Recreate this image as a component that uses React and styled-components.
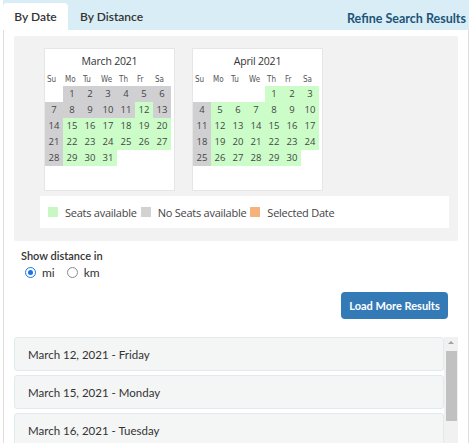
import React from "react";
import styled, { createGlobalStyle } from "styled-components";

const Global = createGlobalStyle`
  html, body { margin: 0; padding: 0; overflow: hidden; background: #fff; }
  body { font-family: Lato, "Open Sans", sans-serif; color: #333; }
  * { box-sizing: border-box; }
`;

const Page = styled.div`
  width: 474px;
  height: 443px;
  padding-left: 3px;
  padding-right: 5px;
  overflow: hidden;
`;

const TabBar = styled.div`
  height: 30px;
  background: #d9edf6;
  display: flex;
  align-items: flex-end;
`;

const Tab = styled.div`
  height: 27px;
  padding: 0 12px;
  display: flex;
  align-items: center;
  justify-content: center;
  white-space: nowrap;
  font-size: 12px;
  font-weight: 600;
  color: #333;
  background: ${(p) => (p.$active ? "#fff" : "transparent")};
  border-radius: 4px 4px 0 0;
  width: ${(p) => (p.$active ? "65px" : "auto")};
`;

const Refine = styled.div`
  margin-left: auto;
  align-self: center;
  padding-top: 6px;
  padding-right: 3px;
  font-size: 12.5px;
  font-weight: 700;
  color: #1d5578;
  white-space: nowrap;
`;

const Panel = styled.div`
  border-left: 1px solid #dedede;
  border-right: 1px solid #dedede;
  padding: 6px 10px 0 10px;
  height: 413px;
`;

const GrayBox = styled.div`
  background: #f2f2f2;
  padding: 12px 9px 13px 26px;
  border-radius: 2px;
`;

const CalRow = styled.div`
  display: flex;
  gap: 17px;
  margin-left: 4px;
`;

const CalBox = styled.div`
  width: 131px;
  height: 143px;
  background: #fff;
  border: 1px solid #e6e6e6;
  padding-top: 4px;
`;

const CalTitle = styled.div`
  height: 16px;
  line-height: 16px;
  text-align: center;
  font-family: "Open Sans", sans-serif;
  font-size: 10.5px;
  color: #333;
  margin-bottom: 5px;
  letter-spacing: -0.2px;
`;

const Grid = styled.div`
  display: grid;
  grid-template-columns: repeat(7, 18px);
`;

const Head = styled.div`
  height: 12px;
  line-height: 12px;
  padding-left: 2px;
  font-family: "DejaVu Sans Condensed", "DejaVu Sans", sans-serif;
  font-stretch: condensed;
  font-size: 8px;
  color: #555;
`;

const Cell = styled.div`
  height: 16px;
  line-height: 16px;
  text-align: center;
  font-family: "Open Sans", sans-serif;
  font-size: 9.5px;
  color: #444;
  background: ${(p) =>
    p.$status === "green" ? "#ccfdc9" : p.$status === "gray" ? "#d0d0d2" : "transparent"};
`;

const Legend = styled.div`
  margin-top: 5px;
  height: 32px;
  background: #fff;
  display: flex;
  align-items: center;
  padding-left: 8px;
  font-family: "Open Sans", sans-serif;
  font-size: 11px;
  color: #444;
  letter-spacing: -0.25px;
`;

const Swatch = styled.span`
  width: 10px;
  height: 10px;
  background: ${(p) => p.$color};
  margin-right: 7px;
  flex: none;
`;

const LegendText = styled.span`
  margin-right: 4px;
`;

const DistLabel = styled.div`
  margin-top: 7px;
  padding-left: 7px;
  height: 16px;
  line-height: 16px;
  font-size: 11px;
  font-weight: 600;
  color: #333;
`;

const RadioRow = styled.div`
  display: flex;
  align-items: center;
  height: 16px;
  padding-left: 11px;
  font-size: 12px;
  color: #333;
`;

const Radio = styled.span`
  width: 11px;
  height: 11px;
  border-radius: 50%;
  border: 1px solid ${(p) => (p.$checked ? "#1a73e8" : "#8a8a8a")};
  display: flex;
  align-items: center;
  justify-content: center;
  margin-right: 6px;
  background: #fff;
  &::after {
    content: "";
    width: 5px;
    height: 5px;
    border-radius: 50%;
    background: ${(p) => (p.$checked ? "#1a73e8" : "transparent")};
  }
`;

const RadioLabel = styled.span`
  margin-right: 12px;
`;

const ButtonRow = styled.div`
  display: flex;
  justify-content: flex-end;
  padding-right: 10px;
  margin-top: 12px;
`;

const Button = styled.button`
  width: 107px;
  height: 27px;
  border: none;
  border-radius: 4px;
  background: #337ab7;
  color: #fff;
  font-family: Lato, sans-serif;
  font-size: 11px;
  font-weight: 700;
  padding: 0;
`;

const ListArea = styled.div`
  margin-top: 18px;
  height: 106px;
  display: flex;
  overflow: hidden;
`;

const Rows = styled.div`
  flex: 1;
  display: flex;
  flex-direction: column;
  gap: 4px;
`;

const Row = styled.div`
  flex: none;
  height: 34px;
  background: #f4f5f5;
  border: 1px solid #e1eaed;
  border-radius: 3px;
  padding-left: 13px;
  display: flex;
  align-items: center;
  font-size: 11.5px;
  color: #333;
`;

const Scrollbar = styled.div`
  width: 14px;
  background: #f1f1f1;
  display: flex;
  flex-direction: column;
  align-items: center;
`;

const Arrow = styled.div`
  margin-top: 4px;
  width: 0;
  height: 0;
  border-left: 3px solid transparent;
  border-right: 3px solid transparent;
  border-bottom: 3px solid #a3a3a3;
`;

const Thumb = styled.div`
  margin-top: 7px;
  width: 11px;
  height: 70px;
  background: #c1c1c1;
`;

const HEADS = ["Su", "Mo", "Tu", "We", "Th", "Fr", "Sa"];

const march = {
  title: "March 2021",
  offset: 1,
  days: 31,
  gray: [1, 2, 3, 4, 5, 6, 7, 8, 9, 10, 11, 13, 14, 21, 28],
};
const april = {
  title: "April 2021",
  offset: 4,
  days: 30,
  gray: [4, 11, 18, 25],
};

function Calendar({ m }) {
  const cells = [];
  for (let i = 0; i < m.offset; i++) cells.push(<Cell key={"e" + i} />);
  for (let d = 1; d <= m.days; d++) {
    cells.push(
      <Cell key={d} $status={m.gray.includes(d) ? "gray" : "green"}>
        {d}
      </Cell>
    );
  }
  return (
    <CalBox>
      <CalTitle>{m.title}</CalTitle>
      <Grid>
        {HEADS.map((h) => (
          <Head key={h}>{h}</Head>
        ))}
        {cells}
      </Grid>
    </CalBox>
  );
}

export default function App() {
  return (
    <Page>
      <Global />
      <TabBar>
        <Tab $active>By Date</Tab>
        <Tab>By Distance</Tab>
        <Refine>Refine Search Results</Refine>
      </TabBar>
      <Panel>
        <GrayBox>
          <CalRow>
            <Calendar m={march} />
            <Calendar m={april} />
          </CalRow>
          <Legend>
            <Swatch $color="#c9f7c4" />
            <LegendText>Seats available</LegendText>
            <Swatch $color="#d2d2d2" />
            <LegendText>No Seats available</LegendText>
            <Swatch $color="#f5b27d" />
            <LegendText>Selected Date</LegendText>
          </Legend>
        </GrayBox>
        <DistLabel>Show distance in</DistLabel>
        <RadioRow>
          <Radio $checked />
          <RadioLabel>mi</RadioLabel>
          <Radio />
          <RadioLabel>km</RadioLabel>
        </RadioRow>
        <ButtonRow>
          <Button>Load More Results</Button>
        </ButtonRow>
        <ListArea>
          <Rows>
            <Row>March 12, 2021 - Friday</Row>
            <Row>March 15, 2021 - Monday</Row>
            <Row>March 16, 2021 - Tuesday</Row>
          </Rows>
          <Scrollbar>
            <Arrow />
            <Thumb />
          </Scrollbar>
        </ListArea>
      </Panel>
    </Page>
  );
}
